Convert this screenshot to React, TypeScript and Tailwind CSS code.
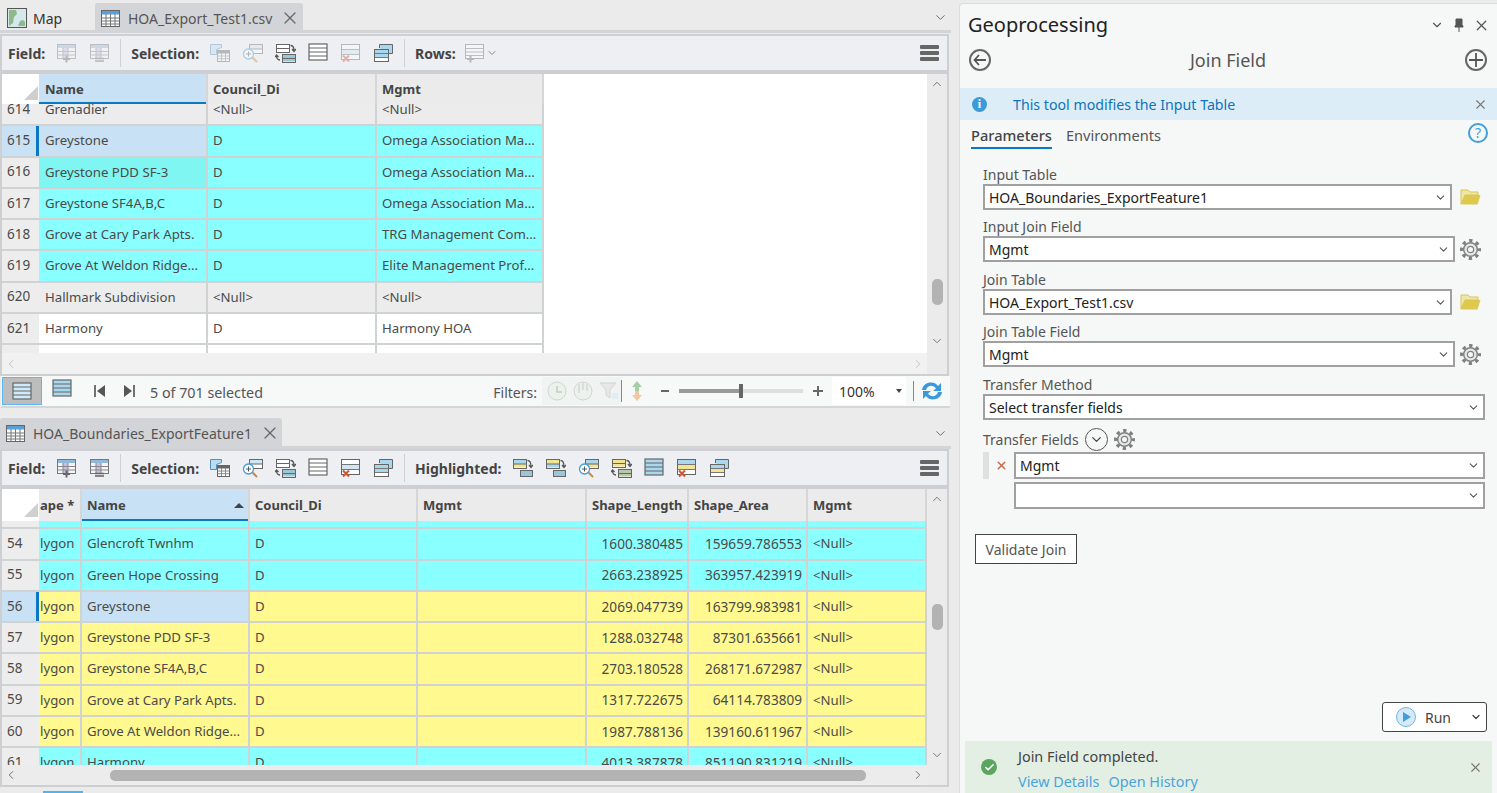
import React from 'react';
import { ChevronDown, ChevronUp, ChevronLeft, ChevronRight, X, Check } from 'lucide-react';

type Cell = { text: string; right?: boolean; bg?: string };
type Row = { num: string; bg: string; active?: boolean; cells: Cell[]; nameBg?: string };

const CYAN = 'bg-[#8affff]';
const YELLOW = 'bg-[#fff98f]';
const GREY = 'bg-[#ececec]';
const WHITE = 'bg-white';
const SEL = 'bg-[#c8e1f4]';

const topRows: Row[] = [
  { num: '614', bg: GREY, cells: [{ text: 'Grenadier' }, { text: '<Null>' }, { text: '<Null>' }] },
  { num: '615', bg: CYAN, active: true, nameBg: SEL, cells: [{ text: 'Greystone' }, { text: 'D' }, { text: 'Omega Association Ma...' }] },
  { num: '616', bg: CYAN, nameBg: 'bg-[#7ff6f2]', cells: [{ text: 'Greystone PDD SF-3' }, { text: 'D' }, { text: 'Omega Association Ma...' }] },
  { num: '617', bg: CYAN, cells: [{ text: 'Greystone SF4A,B,C' }, { text: 'D' }, { text: 'Omega Association Ma...' }] },
  { num: '618', bg: CYAN, cells: [{ text: 'Grove at Cary Park Apts.' }, { text: 'D' }, { text: 'TRG Management Com...' }] },
  { num: '619', bg: CYAN, cells: [{ text: 'Grove At Weldon Ridge...' }, { text: 'D' }, { text: 'Elite Management Prof...' }] },
  { num: '620', bg: GREY, cells: [{ text: 'Hallmark Subdivision' }, { text: '<Null>' }, { text: '<Null>' }] },
  { num: '621', bg: WHITE, cells: [{ text: 'Harmony' }, { text: 'D' }, { text: 'Harmony HOA' }] },
  { num: '', bg: WHITE, cells: [{ text: '' }, { text: '' }, { text: '' }] },
];

const bottomRow = (num: string, bg: string, name: string, len: string, area: string, active = false): Row => ({
  num,
  bg,
  active,
  nameBg: active ? SEL : undefined,
  cells: [
    { text: 'lygon' },
    { text: name },
    { text: 'D' },
    { text: '' },
    { text: len, right: true },
    { text: area, right: true },
    { text: '<Null>' },
  ],
});

const bottomRows: Row[] = [
  bottomRow('', CYAN, '', '', ''),
  bottomRow('54', CYAN, 'Glencroft Twnhm', '1600.380485', '159659.786553'),
  bottomRow('55', CYAN, 'Green Hope Crossing', '2663.238925', '363957.423919'),
  bottomRow('56', YELLOW, 'Greystone', '2069.047739', '163799.983981', true),
  bottomRow('57', YELLOW, 'Greystone PDD SF-3', '1288.032748', '87301.635661'),
  bottomRow('58', YELLOW, 'Greystone SF4A,B,C', '2703.180528', '268171.672987'),
  bottomRow('59', YELLOW, 'Grove at Cary Park Apts.', '1317.722675', '64114.783809'),
  bottomRow('60', YELLOW, 'Grove At Weldon Ridge...', '1987.788136', '139160.611967'),
  bottomRow('61', CYAN, 'Harmony', '4013.387878', '851190.831219'),
];
bottomRows[0].cells = bottomRows[0].cells.map(() => ({ text: '' }));

const TabGrid = () => (
  <svg width="19" height="17" viewBox="0 0 19 17" className="shrink-0">
    <rect x="0.5" y="0.5" width="18" height="16" fill="#fff" stroke="#666" />
    <rect x="1" y="1" width="17" height="3.5" fill="#5b9fd8" />
    <path d="M1 8h17M1 11h17M1 14h17M5 4v12M9.5 4v12M14 4v12" stroke="#777" fill="none" />
  </svg>
);

const MapIcon = () => (
  <svg width="20" height="20" viewBox="0 0 20 20" className="shrink-0">
    <rect x="0.5" y="0.5" width="19" height="19" fill="#d5e8ee" stroke="#555" />
    <path d="M2 2h7l1 4-3 3-1 6-4 3z" fill="#8fb98a" />
    <path d="M11 18l2-5 3-1 2 2v4z" fill="#8fb98a" />
  </svg>
);

const FieldIcon = ({ minus, dim }: { minus?: boolean; dim?: boolean }) => (
  <svg width="21" height="20" viewBox="0 0 21 20" className={dim ? 'opacity-40' : ''}>
    <rect x="1.5" y="1.5" width="18" height="14" fill="#f4f4f8" stroke="#777" />
    <rect x="2" y="2" width="17" height="3" fill="#8fb9dc" />
    <rect x="7" y="5" width="5" height="10" fill="#c8bfe0" />
    <path d="M2 8.5h17M2 12h17M7 5v10M12 5v10" stroke="#888" fill="none" />
    {minus ? (
      <path d="M6 15.5h9M6 18h9" stroke="#666" strokeWidth="1.6" fill="none" />
    ) : (
      <path d="M7 16h7M10.5 12.5v7" stroke="#666" strokeWidth="2" fill="none" />
    )}
  </svg>
);

const Stack = ({ x, y, w, h, a, b }: { x: number; y: number; w: number; h: number; a: string; b: string }) => (
  <g>
    <rect x={x + 0.5} y={y + 0.5} width={w} height={h} fill="#fff" stroke="#666" />
    <rect x={x + 1} y={y + 1} width={w - 1} height={h / 2 - 0.5} fill={a} />
    <rect x={x + 1} y={y + h / 2 + 0.5} width={w - 1} height={h / 2 - 1} fill={b} />
    <path d={`M${x + 1} ${y + h / 2 + 0.5}h${w - 1}`} stroke="#666" />
  </g>
);

const SelectAttrIcon = ({ dim }: { dim?: boolean }) => (
  <svg width="21" height="20" viewBox="0 0 21 20" className={dim ? 'opacity-40' : ''}>
    <path d="M1.5 1.5h11v3l-5 2v5h-6z" fill="#b8dcf2" stroke="#5a8fb5" />
    <rect x="8.5" y="7.5" width="12" height="11" fill="#fff" stroke="#666" />
    <rect x="9" y="8" width="11" height="2.5" fill="#666" />
    <path d="M9 13h11M9 15.7h11M12.5 10v8M16.5 10v8" stroke="#888" fill="none" />
  </svg>
);

const ZoomIcon = ({ a, b, dim }: { a: string; b: string; dim?: boolean }) => (
  <svg width="21" height="20" viewBox="0 0 21 20" className={dim ? 'opacity-40' : ''}>
    <Stack x={7} y={1} w={13} h={9} a={a} b={b} />
    <circle cx="6.5" cy="11" r="5" fill="#fff" stroke="#3f9fdc" strokeWidth="1.3" />
    <path d="M4 11h5M6.5 8.5v5" stroke="#555" fill="none" />
    <path d="M10.5 14.5l4.5 4.5" stroke="#c98a45" strokeWidth="2" fill="none" />
  </svg>
);

const SwitchIcon = ({ a, b }: { a: string; b: string }) => (
  <svg width="21" height="20" viewBox="0 0 21 20">
    <Stack x={1} y={1} w={13} h={8} a={a} b={a} />
    <Stack x={7} y={11} w={13} h={8} a={b} b={b} />
    <path d="M15.5 2.5c3 0 3.5 2 3.5 5M17 6l2 2.5 2-2.5M5 17c-2.5 0-3.5-2-3.5-4.5M0 14l1.5-2 2 2" stroke="#555" strokeWidth="1.3" fill="none" />
  </svg>
);

const MoveIcon = ({ a, b }: { a: string; b: string }) => (
  <svg width="21" height="20" viewBox="0 0 21 20">
    <Stack x={1} y={1} w={13} h={9} a={a} b={b} />
    <rect x="8.5" y="12.5" width="12" height="6" fill="#9cc7d8" stroke="#666" />
    <path d="M15.5 2.5c3 0 3.5 2 3.5 6M17 7l2 2.5 2-2.5" stroke="#555" strokeWidth="1.3" fill="none" />
  </svg>
);

const RowsIcon = ({ fill = '#fff' }: { fill?: string }) => (
  <svg width="20" height="18" viewBox="0 0 20 18">
    <rect x="1" y="1" width="18" height="16" fill={fill} stroke="#666" strokeWidth="1.2" />
    <path d="M1 5h18M1 9h18M1 13h18" stroke="#666" fill="none" />
  </svg>
);

const DeleteIcon = ({ a, b, dim }: { a: string; b: string; dim?: boolean }) => (
  <svg width="21" height="20" viewBox="0 0 21 20" className={dim ? 'opacity-40' : ''}>
    <rect x="1.5" y="1.5" width="18" height="15" fill="#fff" stroke="#666" />
    <rect x="2" y="2" width="17" height="4" fill={a} />
    <rect x="2" y="7" width="17" height="4" fill={b} />
    <path d="M2 6.5h17M2 11.5h17" stroke="#777" fill="none" />
    <path d="M3 12.5l6 6M9 12.5l-6 6" stroke="#c9563a" strokeWidth="2" fill="none" />
  </svg>
);

const CopyIcon = ({ a, b, dim }: { a: string; b: string; dim?: boolean }) => (
  <svg width="21" height="20" viewBox="0 0 21 20" className={dim ? 'opacity-40' : ''}>
    <path d="M6.5 5V1.5h13v9H16" fill={a} stroke="#666" />
    <rect x="1.5" y="6.5" width="14" height="12" fill="#fff" stroke="#666" />
    <rect x="2" y="7" width="13" height="3.5" fill={a} />
    <rect x="2" y="11" width="13" height="3.5" fill={b} />
    <path d="M2 10.5h13M2 14.5h13" stroke="#777" fill="none" />
  </svg>
);

const AddRowIcon = () => (
  <svg width="21" height="20" viewBox="0 0 21 20" className="opacity-40">
    <rect x="1.5" y="1.5" width="18" height="14" fill="#fff" stroke="#666" />
    <path d="M2 5.5h17M2 9h17M2 12.5h17" stroke="#777" fill="none" />
    <path d="M3 16h7M6.5 12.5v7" stroke="#666" strokeWidth="2" fill="none" />
  </svg>
);

const Hamburger = () => (
  <div className="ml-auto mr-[8px] flex flex-col gap-[2px]">
    <div className="h-[4px] w-[19px] rounded-[1px] bg-[#666]" />
    <div className="h-[4px] w-[19px] rounded-[1px] bg-[#666]" />
    <div className="h-[4px] w-[19px] rounded-[1px] bg-[#666]" />
  </div>
);

const Sep = () => <div className="mx-[10px] h-[28px] w-px bg-[#cfd0d2]" />;

const Label = ({ children, className = '' }: { children: React.ReactNode; className?: string }) => (
  <span className={`text-[14px] font-bold text-[#444] ${className}`}>{children}</span>
);

const Corner = () => (
  <div className="relative h-full w-[37px] shrink-0 bg-white">
    <div className="absolute bottom-[4px] right-[1px] h-0 w-0 border-b-[14px] border-l-[14px] border-b-[#cfcfcf] border-l-transparent" />
  </div>
);

const Head = ({ w, label, active, sort, pad = 'pl-[5px]' }: { w: string; label: string; active?: boolean; sort?: boolean; pad?: string }) => (
  <div className={`relative flex h-full shrink-0 items-center border-r-2 border-[#d6d6d6] pt-[2px] text-[13px] font-bold text-[#444] ${pad} ${w} ${active ? 'bg-[#c8e1f4]' : 'bg-[#ebebeb]'}`}>
    {label}
    {sort && <div className="absolute right-[4px] top-[14px] h-0 w-0 border-x-[5px] border-b-[5px] border-x-transparent border-b-[#444]" />}
    {active && <div className="absolute inset-x-0 bottom-0 h-[2px] bg-[#0b78c4]" />}
  </div>
);

const DataRow = ({ row, widths }: { row: Row; widths: string[] }) => {
  const wide = row.cells.length === 7;
  return (
    <div className="flex h-[31.25px] shrink-0 border-b-2 border-[#cfd3d3] text-[13.2px] leading-none text-[#4a4a4a]">
      <div className={`relative flex w-[37px] shrink-0 items-center pl-[5px] text-[13.5px] ${row.active ? SEL : 'bg-[#ededed]'}`}>
        {row.num}
        {row.active && <div className="absolute inset-y-0 right-0 w-[3px] bg-[#0b78c4]" />}
      </div>
      {row.cells.map((c, i) => {
        const isName = wide ? i === 1 : i === 0;
        let pad = 'pl-[5px]';
        if (c.right) pad = 'justify-end pr-[4px] text-[13.6px]';
        else if (wide && i === 0) pad = 'pl-[1px]';
        else if (!wide && i === 0) pad = 'pl-[6px]';
        return (
          <div
            key={i}
            className={`flex shrink-0 items-center overflow-hidden whitespace-nowrap border-r-2 border-[#d0d3d3] ${pad} ${widths[i]} ${isName && row.nameBg ? row.nameBg : row.bg}`}
          >
            {c.text}
          </div>
        );
      })}
    </div>
  );
};

const TopWidths = ['w-[169px]', 'w-[169px]', 'w-[167px]'];
const BottomWidths = ['w-[43px]', 'w-[168px]', 'w-[168px]', 'w-[169px]', 'w-[102px]', 'w-[119px]', 'w-[119px]'];

const Select = ({ value, className = '' }: { value: string; className?: string }) => (
  <div className={`flex h-[26px] items-center justify-between border-2 border-[#a0a0a0] bg-white pl-[4px] pr-[3px] text-[14px] text-[#222] ${className}`}>
    <span>{value}</span>
    <ChevronDown size={13} strokeWidth={2} className="text-[#555]" />
  </div>
);

const Folder = () => (
  <svg width="21" height="18" viewBox="0 0 21 18" className="ml-[8px] shrink-0">
    <path d="M1 16V2h7l2 2h8v3H5z" fill="#f0e6a8" stroke="#d8c557" />
    <path d="M1 16.5 5 7h15.5l-3 9.5z" fill="#dfc84e" />
  </svg>
);

const GearIcon = ({ className = '' }: { className?: string }) => (
  <svg width="21" height="21" viewBox="0 0 20 20" className={`shrink-0 ${className}`}>
    <circle cx="10" cy="10" r="8.5" fill="none" stroke="#808080" strokeWidth="3" strokeDasharray="3.2 3.48" strokeDashoffset="1.6" />
    <circle cx="10" cy="10" r="6.5" fill="#e8e8e8" stroke="#808080" strokeWidth="1.4" />
    <circle cx="10" cy="10" r="3" fill="#f5f8f6" stroke="#808080" strokeWidth="1.2" />
  </svg>
);

const FieldLabel = ({ children }: { children: string }) => (
  <div className="flex h-[19px] items-center text-[14px] leading-none text-[#555]">{children}</div>
);

const Circle = ({ children }: { children: React.ReactNode }) => (
  <div className="flex h-[22px] w-[22px] items-center justify-center rounded-full border-2 border-[#666] text-[#555]">{children}</div>
);

export default function App() {
  return (
    <div className="flex h-[793px] w-[1497px] overflow-hidden bg-[#ebebeb] font-['Noto_Sans',sans-serif]">
      <div className="flex w-[951px] shrink-0 flex-col">
        {/* top pane tabs */}
        <div className="flex h-[30px] shrink-0 items-end pl-[7px] pr-[3px]">
          <div className="flex h-[27px] w-[88px] items-center gap-[6px] pt-[3px] text-[14px] text-[#333]">
            <MapIcon />
            Map
          </div>
          <div className="flex h-[27px] w-[208px] items-center rounded-t-[3px] bg-[#d3d4d8] pl-[6px] pt-[3px] text-[14px] text-[#555]">
            <TabGrid />
            <span className="ml-[8px]">HOA_Export_Test1.csv</span>
            <X size={20} strokeWidth={1.5} className="ml-[8px] text-[#666]" />
          </div>
          <ChevronDown size={15} strokeWidth={1.5} className="mb-[5px] ml-auto text-[#666]" />
        </div>
        <div className="h-[3px] shrink-0 bg-[#d3d4d8]" />
        <div className="mr-[2px] mt-[1px] flex h-[38px] shrink-0 items-center border-2 border-[#cdcfd2] bg-[#eeeff2] pl-[6px]">
          <Label>Field:</Label>
          <div className="ml-[11px] flex gap-[12px]">
            <FieldIcon dim />
            <FieldIcon minus dim />
          </div>
          <Sep />
          <Label>Selection:</Label>
          <div className="ml-[10px] flex gap-[12px]">
            <SelectAttrIcon dim />
            <ZoomIcon a="#cfe6f5" b="#fff" dim />
            <SwitchIcon a="#fff" b="#9cc7d8" />
            <RowsIcon />
            <DeleteIcon a="#fff" b="#cfe6f5" dim />
            <CopyIcon a="#a9d7ee" b="#a9d7ee" />
          </div>
          <Sep />
          <Label>Rows:</Label>
          <div className="ml-[8px] flex items-center">
            <AddRowIcon />
            <ChevronDown size={12} strokeWidth={2} className="ml-[1px] text-[#888]" />
          </div>
          <Hamburger />
        </div>
        <div className="mr-[2px] flex h-[304px] shrink-0 border-2 border-[#cdcfd2] bg-white">
          <div className="flex w-[925px] shrink-0 flex-col">
            <div className="relative z-10 flex h-[30px] shrink-0">
              <Corner />
              <Head w="w-[169px]" label="Name" active pad="pl-[6px]" />
              <Head w="w-[169px]" label="Council_Di" />
              <Head w="w-[167px]" label="Mgmt" />
            </div>
            <div className="min-h-0 flex-1 overflow-hidden">
              <div className="-mt-[9px] w-[542px]">
                {topRows.map(r => (
                  <DataRow key={r.num || 'blank'} row={r} widths={TopWidths} />
                ))}
              </div>
            </div>
            <div className="flex h-[21px] shrink-0 items-center justify-between bg-[#f1f1f1] px-[2px]">
              <ChevronLeft size={14} strokeWidth={1.5} className="text-[#bbb]" />
              <ChevronRight size={14} strokeWidth={1.5} className="text-[#bbb]" />
            </div>
          </div>
          <div className="flex w-[20px] shrink-0 flex-col items-center bg-[#ebebeb] py-[3px]">
            <ChevronUp size={14} strokeWidth={1.5} className="text-[#666]" />
            <div className="mt-[188px] h-[26px] w-[11px] rounded-[5px] bg-[#b3b3b3]" />
            <ChevronDown size={14} strokeWidth={1.5} className="mb-[23px] mt-auto text-[#666]" />
          </div>
        </div>
        {/* status bar */}
        <div className="ml-[1px] mr-[1px] flex h-[32px] shrink-0 items-center border-b-2 border-[#d6d6d6] bg-[#f7f8f8] text-[14px] text-[#555]">
          <div className="ml-[1px] flex h-[28px] w-[40px] items-center justify-center border border-[#5cb6f2] bg-[#bdbdbd]">
            <RowsIcon fill="#cfeaf8" />
          </div>
          <div className="-mt-[6px] ml-[10px]">
            <RowsIcon fill="#a9d7ee" />
          </div>
          <svg width="14" height="14" viewBox="0 0 14 14" className="ml-[21px]">
            <path d="M2 1v12" stroke="#444" strokeWidth="1.5" />
            <path d="M12 1v12L4 7z" fill="#555" />
          </svg>
          <svg width="14" height="14" viewBox="0 0 14 14" className="ml-[15px]">
            <path d="M12 1v12" stroke="#444" strokeWidth="1.5" />
            <path d="M2 1v12l8-6z" fill="#555" />
          </svg>
          <span className="ml-[14px] pt-[3px] text-[14.3px]">5 of 701 selected</span>
          <span className="ml-auto pt-[2px]">Filters:</span>
          <div className="ml-[5px] flex h-[28px] items-center gap-[6px] bg-[#eef0f0] pl-[5px] pr-[2px] opacity-60">
            <svg width="20" height="20" viewBox="0 0 20 20">
              <circle cx="10" cy="10" r="9" fill="#e4efe4" stroke="#bbb" />
              <path d="M10 5v6h5" stroke="#aaa" strokeWidth="1.5" fill="none" />
            </svg>
            <svg width="20" height="20" viewBox="0 0 20 20">
              <circle cx="10" cy="10" r="9" fill="#e4efe4" stroke="#bbb" />
              <path d="M6 3v9M10 2v7M14 3v7" stroke="#aaa" fill="none" />
            </svg>
            <svg width="20" height="20" viewBox="0 0 20 20">
              <path d="M1 2h16l-6 7v8l-4-3V9z" fill="#ddd" stroke="#bbb" />
              <path d="M13 12h6v6h-6z" fill="#cfe6f5" />
            </svg>
          </div>
          <div className="h-[22px] w-px bg-[#888]" />
          <svg width="12" height="22" viewBox="0 0 12 22" className="ml-[9px]">
            <path d="M6 1 1 7h3v4h4V7h3z" fill="#a7cfa7" />
            <path d="M6 21l5-6H8v-4H4v4H1z" fill="#f0c9a0" />
          </svg>
          <span className="ml-[18px] h-[2px] w-[8px] bg-[#666]" />
          <div className="relative ml-[10px] h-[4px] w-[124px] bg-[#dedede]">
            <div className="h-full w-[62px] bg-[#999]" />
            <div className="absolute left-[60px] top-[-5px] h-[14px] w-[4px] bg-[#666]" />
          </div>
          <span className="relative ml-[10px] h-[10px] w-[10px]">
            <span className="absolute left-0 top-[4px] h-[2px] w-[10px] bg-[#666]" />
            <span className="absolute left-[4px] top-0 h-[10px] w-[2px] bg-[#666]" />
          </span>
          <div className="ml-[9px] flex h-[28px] w-[74px] items-center justify-between bg-white pl-[7px] pr-[4px] text-[#333]">
            100%
            <div className="h-0 w-0 border-x-[3px] border-t-[4px] border-x-transparent border-t-[#444]" />
          </div>
          <div className="ml-[7px] h-[20px] w-px bg-[#888]" />
          <svg width="22" height="22" viewBox="0 0 22 20" className="ml-[7px]">
            <path d="M1 9c1-8 12-10 16-4l3-3v8h-8l3-2.5C12 3 6 4.5 5 9z" fill="#3a98dc" />
            <path d="M21 11c-1 8-12 10-16 4l-3 3v-8h8l-3 2.5C10 17 16 15.5 17 11z" fill="#3a98dc" />
          </svg>
          <div className="w-[7px]" />
        </div>
        {/* bottom pane tabs */}
        <div className="flex h-[38px] shrink-0 items-end pr-[3px]">
          <div className="flex h-[28px] w-[282px] items-center rounded-t-[3px] bg-[#d3d4d8] pl-[6px] pt-[2px] text-[14px] text-[#555]">
            <TabGrid />
            <span className="ml-[8px]">HOA_Boundaries_ExportFeature1</span>
            <X size={20} strokeWidth={1.5} className="ml-[8px] text-[#666]" />
          </div>
          <ChevronDown size={15} strokeWidth={1.5} className="mb-[5px] ml-auto text-[#666]" />
        </div>
        <div className="h-[3px] shrink-0 bg-[#d3d4d8]" />
        <div className="mr-[2px] flex h-[38px] shrink-0 items-center border-2 border-[#cdcfd2] bg-[#eeeff2] pl-[6px]">
          <Label>Field:</Label>
          <div className="ml-[11px] flex gap-[12px]">
            <FieldIcon />
            <FieldIcon minus />
          </div>
          <Sep />
          <Label>Selection:</Label>
          <div className="ml-[10px] flex gap-[12px]">
            <SelectAttrIcon />
            <ZoomIcon a="#cfe6f5" b="#fff" />
            <SwitchIcon a="#fff" b="#9cc7d8" />
            <RowsIcon />
            <DeleteIcon a="#fff" b="#cfe6f5" />
            <CopyIcon a="#a9d7ee" b="#a9d7ee" />
          </div>
          <Sep />
          <Label>Highlighted:</Label>
          <div className="ml-[11px] flex gap-[12px]">
            <MoveIcon a="#a9d7ee" b="#f2e493" />
            <MoveIcon a="#f2e493" b="#a9d7ee" />
            <ZoomIcon a="#a9d7ee" b="#f2e493" />
            <SwitchIcon a="#f2e493" b="#b7c9a8" />
            <RowsIcon fill="#a9d7ee" />
            <DeleteIcon a="#a9d7ee" b="#f2e493" />
            <CopyIcon a="#a9d7ee" b="#f2e493" />
          </div>
          <Hamburger />
        </div>
        <div className="mr-[2px] flex min-h-0 flex-1 border-2 border-[#cdcfd2] bg-white">
          <div className="flex w-[925px] shrink-0 flex-col">
            <div className="relative z-10 flex h-[32px] shrink-0">
              <Corner />
              <Head w="w-[43px]" label="ape *" pad="pl-[1px]" />
              <Head w="w-[168px]" label="Name" active sort />
              <Head w="w-[168px]" label="Council_Di" />
              <Head w="w-[169px]" label="Mgmt" />
              <Head w="w-[102px]" label="Shape_Length" />
              <Head w="w-[119px]" label="Shape_Area" />
              <Head w="w-[119px]" label="Mgmt" />
            </div>
            <div className="min-h-0 flex-1 overflow-hidden">
              <div className="-mt-[23px]">
                {bottomRows.map((r, i) => (
                  <DataRow key={i} row={r} widths={BottomWidths} />
                ))}
              </div>
            </div>
            <div className="flex h-[20px] shrink-0 items-center bg-[#ececec] px-[2px]">
              <ChevronLeft size={14} strokeWidth={1.5} className="text-[#666]" />
              <div className="ml-[92px] h-[11px] w-[756px] rounded-[5px] bg-[#b3b3b3]" />
              <ChevronRight size={14} strokeWidth={1.5} className="ml-auto text-[#666]" />
            </div>
          </div>
          <div className="flex w-[20px] shrink-0 flex-col items-center bg-[#ebebeb] py-[3px]">
            <ChevronUp size={14} strokeWidth={1.5} className="text-[#666]" />
            <div className="mt-[98px] h-[26px] w-[11px] rounded-[5px] bg-[#b3b3b3]" />
            <ChevronDown size={14} strokeWidth={1.5} className="mb-[20px] mt-auto text-[#666]" />
          </div>
        </div>
        <div className="flex h-[6px] shrink-0 items-end">
          <div className="ml-[43px] h-[2px] w-[40px] bg-[#4db5f0]" />
        </div>
      </div>

      {/* geoprocessing pane */}
      <div className="ml-[8px] mt-[3px] flex min-w-0 flex-1 flex-col rounded-tl-[4px] border-l border-t border-[#dcdcdc] bg-[#f5f8f6]">
        <div className="flex h-[40px] shrink-0 items-center pl-[8px] pr-[7px] pt-[2px] text-[20px] text-[#222]">
          Geoprocessing
          <ChevronDown size={14} strokeWidth={2} className="ml-auto text-[#555]" />
          <svg width="12" height="14" viewBox="0 0 12 14" className="ml-[9px]">
            <path d="M3 1h6v6l1 1v1H2V8l1-1zM6 9v5" fill="#555" stroke="#555" />
          </svg>
          <X size={17} strokeWidth={1.8} className="ml-[8px] text-[#555]" />
        </div>
        <div className="flex h-[32px] shrink-0 items-center justify-between pl-[9px] pr-[10px]">
          <Circle>
            <svg width="14" height="12" viewBox="0 0 14 12">
              <path d="M13 6H2M6 1 1.5 6 6 11" stroke="#555" strokeWidth="1.8" fill="none" />
            </svg>
          </Circle>
          <span className="text-[18px] leading-none text-[#555]">Join Field</span>
          <Circle>
            <svg width="14" height="14" viewBox="0 0 14 14">
              <path d="M0 7h14M7 0v14" stroke="#555" strokeWidth="1.8" fill="none" />
            </svg>
          </Circle>
        </div>
        <div className="mt-[12px] flex h-[32px] shrink-0 items-center bg-[#ddedf8] pl-[12px] pr-[9px] text-[14.2px] text-[#0f74b8]">
          <div className="flex h-[15px] w-[15px] items-center justify-center rounded-full bg-[#3c9ad9] font-['Liberation_Serif',serif] text-[12px] font-bold leading-none text-white">i</div>
          <span className="ml-[26px] pt-[1px]">This tool modifies the Input Table</span>
          <X size={15} strokeWidth={1.8} className="ml-auto text-[#777]" />
        </div>
        <div className="flex h-[30px] shrink-0 items-start pl-[11px] pr-[9px] pt-[3px] text-[14.6px] leading-[24px] text-[#555]">
          <span className="border-b-2 border-[#0b78c4] font-medium text-[#444]">Parameters</span>
          <span className="ml-[14px]">Environments</span>
          <div className="ml-auto flex h-[20px] w-[20px] items-center justify-center rounded-full border-2 border-[#3f9fdc] text-[14px] leading-none text-[#3f9fdc]">?</div>
        </div>
        <div className="flex min-h-0 flex-1 flex-col pl-[23px] pr-[11px] pt-[15px]">
          <FieldLabel>Input Table</FieldLabel>
          <div className="flex items-center">
            <Select value="HOA_Boundaries_ExportFeature1" className="w-[469px]" />
            <Folder />
          </div>
          <div className="mt-[7px]"><FieldLabel>Input Join Field</FieldLabel></div>
          <div className="flex items-center">
            <Select value="Mgmt" className="w-[472px]" />
            <GearIcon className="ml-[5px]" />
          </div>
          <div className="mt-[8px]"><FieldLabel>Join Table</FieldLabel></div>
          <div className="flex items-center">
            <Select value="HOA_Export_Test1.csv" className="w-[469px]" />
            <Folder />
          </div>
          <div className="mt-[7px]"><FieldLabel>Join Table Field</FieldLabel></div>
          <div className="flex items-center">
            <Select value="Mgmt" className="w-[472px]" />
            <GearIcon className="ml-[5px]" />
          </div>
          <div className="mt-[8px]"><FieldLabel>Transfer Method</FieldLabel></div>
          <Select value="Select transfer fields" className="mr-[1px]" />
          <div className="mt-[7px] flex h-[25px] items-center text-[14px] text-[#555]">
            Transfer Fields
            <div className="ml-[6px] flex h-[23px] w-[23px] items-center justify-center rounded-full border border-[#555]">
              <ChevronDown size={15} strokeWidth={2} className="text-[#444]" />
            </div>
            <GearIcon className="ml-[6px]" />
          </div>
          <div className="flex h-[27px] items-center">
            <div className="h-full w-[6px] bg-[#e0e0e0]" />
            <X size={13} strokeWidth={2.5} className="ml-[6px] text-[#c8664a]" />
            <Select value="Mgmt" className="ml-[6px] mr-[1px] h-[27px] flex-1" />
          </div>
          <div className="mr-[1px] mt-[3px] flex justify-end">
            <Select value="" className="h-[27px] w-[471px]" />
          </div>
          <div className="-ml-[8px] mt-[25px] flex h-[30px] w-[102px] items-center justify-center border border-[#444] bg-white text-[14px] text-[#555]">Validate Join</div>
          <div className="-mr-[1px] mb-[9px] mt-auto flex h-[30px] w-[105px] items-center self-end rounded-[3px] border border-[#444] bg-white pl-[13px] pr-[4px] text-[14px] text-[#444]">
            <svg width="20" height="20" viewBox="0 0 20 20">
              <circle cx="10" cy="10" r="9.5" fill="#d5e9f7" stroke="#6db6e6" />
              <path d="M7 5v10l8-5z" fill="#3f9fdc" />
            </svg>
            <span className="ml-[9px]">Run</span>
            <ChevronDown size={12} strokeWidth={2.5} className="ml-auto text-[#444]" />
          </div>
        </div>
        <div className="ml-[5px] mr-[5px] flex h-[52px] shrink-0 items-center bg-[#e4efe4] pl-[16px] pr-[9px] text-[14.4px]">
          <div className="flex h-[16px] w-[16px] items-center justify-center rounded-full bg-[#5aa55f]">
            <Check size={11} strokeWidth={3.5} className="text-white" />
          </div>
          <div className="ml-[21px] flex flex-col gap-[10px] pt-[5px] leading-none">
            <span className="text-[#444]">Join Field completed.</span>
            <div className="flex gap-[9px] text-[#4aa3dc]">
              <span>View Details</span>
              <span>Open History</span>
            </div>
          </div>
          <X size={15} strokeWidth={1.8} className="ml-auto text-[#777]" />
        </div>
      </div>
    </div>
  );
}
